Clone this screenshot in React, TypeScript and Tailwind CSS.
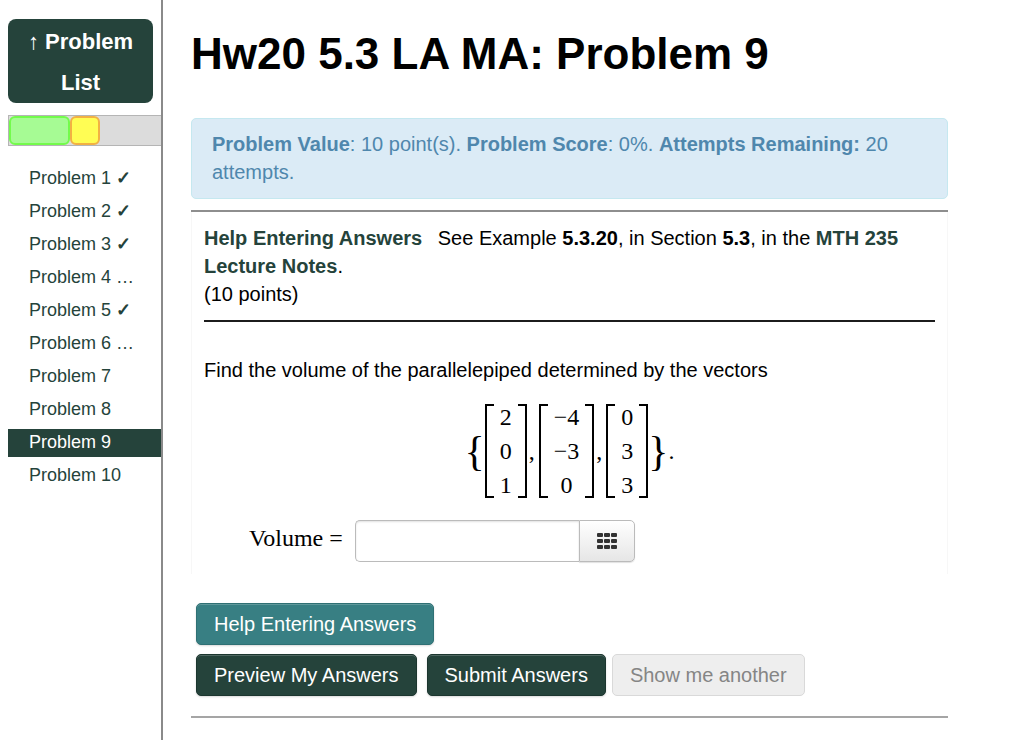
import clsx from "clsx";

const problems = [
  { id: 1, mark: "✓" },
  { id: 2, mark: "✓" },
  { id: 3, mark: "✓" },
  { id: 4, mark: "…" },
  { id: 5, mark: "✓" },
  { id: 6, mark: "…" },
  { id: 7, mark: "" },
  { id: 8, mark: "" },
  { id: 9, mark: "" },
  { id: 10, mark: "" },
];

const CURRENT = 9;

const vectors = [
  ["2", "0", "1"],
  ["−4", "−3", "0"],
  ["0", "3", "3"],
];

function Sidebar() {
  return (
    <aside className="w-[163px] shrink-0 border-r-2 border-[#8a8a8a] pl-2 pt-[19px]">
      <a
        href="#list"
        className="mr-2 block rounded-lg bg-[#25433b] px-4 pt-[2px] text-center text-[22px] leading-[41px] font-bold text-white"
      >
        <span className="font-normal">↑</span> Problem List
      </a>

      <div className="mt-3 flex h-[31px] border border-r-0 border-[#b5b5b5] bg-[#dcdcdc]">
        <div className="w-2/5 rounded-md border-2 border-[#73fb4c] bg-[#a6fb94]" />
        <div className="w-1/5 rounded-md border-2 border-[#f2b143] bg-[#fffd54]" />
      </div>

      <nav className="mt-[19px]">
        <ul className="flex flex-col gap-[5px]">
          {problems.map(({ id, mark }) => (
            <li key={id}>
              <a
                href={`#problem-${id}`}
                className={clsx(
                  "block pb-[2px] pl-[21px] text-[18px] leading-[26px] whitespace-nowrap",
                  id === CURRENT ? "bg-[#25433b] text-white" : "text-[#25433b]",
                )}
              >
                Problem {id} <span className={clsx(mark === "✓" && "font-bold")}>{mark}</span>
              </a>
            </li>
          ))}
        </ul>
      </nav>
    </aside>
  );
}

function Vector({ entries }: { entries: string[] }) {
  return (
    <div className="flex">
      <div className="w-[9px] border-2 border-r-0 border-black" />
      <div className="-my-1 px-[6px] text-center leading-[34px]">
        {entries.map((entry, idx) => (
          <div key={idx}>{entry}</div>
        ))}
      </div>
      <div className="w-[9px] border-2 border-l-0 border-black" />
    </div>
  );
}

function VectorSet() {
  return (
    <div className="flex items-center justify-center font-['Liberation_Serif',serif] text-[24px]">
      <span className="text-[42px] leading-[46px]">{"{"}</span>
      {vectors.map((entries, idx) => (
        <div key={idx} className="flex items-center">
          <Vector entries={entries} />
          {idx < vectors.length - 1 && <span className="pl-[2px] pr-1">,</span>}
        </div>
      ))}
      <span className="text-[42px] leading-[46px]">{"}"}</span>
      <span>.</span>
    </div>
  );
}

function KeypadIcon() {
  return (
    <svg width="20" height="16" viewBox="0 0 20 16" fill="#333" aria-hidden="true">
      {[0, 6, 12].map((y) =>
        [0, 7, 14].map((x) => (
          <rect key={`${x}-${y}`} x={x} y={y} width="6" height="4" rx="1" />
        )),
      )}
    </svg>
  );
}

const button =
  "h-[42px] rounded-[5px] border px-[17px] text-[20px] leading-7 whitespace-nowrap";
const solid =
  "text-white shadow-[inset_0_1px_0_rgba(255,255,255,0.2),0_1px_2px_rgba(0,0,0,0.15)]";

export default function App() {
  return (
    <div className="flex min-h-screen bg-white font-['Liberation_Sans',Arial,sans-serif] text-black">
      <Sidebar />

      <main className="mr-[76px] ml-7 min-w-0 flex-1 pt-6 pb-[22px] text-[20px] leading-7">
        <h1 className="text-[44px] leading-[60px] font-bold">Hw20 5.3 LA MA: Problem 9</h1>

        <div className="mt-[34px] rounded-[5px] border border-[#c5e8f0] bg-[#dbebf6] px-5 pt-[11px] pb-3 text-[#4f87ad]">
          <b>Problem Value</b>: 10 point(s). <b>Problem Score</b>: 0%. <b>Attempts Remaining:</b> 20
          attempts.
        </div>

        <hr className="mt-[11px] border-t-2 border-[#8e8e8e]" />

        <section className="border-x border-[#f7f7f7] px-3 pt-3 pb-3">
          <p>
            <a href="#help" className="mr-[10px] font-bold text-[#25433b]">
              Help Entering Answers
            </a>{" "}
            See Example <b>5.3.20</b>, in Section <b>5.3</b>, in the{" "}
            <a href="#notes" className="font-bold text-[#25433b]">
              MTH 235 Lecture Notes
            </a>
            .
          </p>
          <p>(10 points)</p>
          <hr className="mt-3 border-t-2 border-[#1c1c1c]" />

          <p className="mt-[34px] mb-5">
            Find the volume of the parallelepiped determined by the vectors
          </p>
          <VectorSet />

          <div className="mt-[22px] ml-[45px] flex items-center">
            <label
              htmlFor="volume"
              className="mr-3 pb-[6px] font-['Liberation_Serif',serif] text-[24px] whitespace-nowrap"
            >
              Volume =
            </label>
            <input
              id="volume"
              type="text"
              className="h-[42px] w-56 rounded-l-[5px] border border-r-0 border-[#bbb] px-2 shadow-[inset_0_1px_2px_rgba(0,0,0,0.12)] outline-none"
            />
            <button
              type="button"
              aria-label="Open equation editor"
              className="flex h-[42px] w-14 items-center justify-center rounded-r-[5px] border border-[#bbb] bg-linear-to-b from-white to-[#e6e6e6] shadow-[0_1px_1px_rgba(0,0,0,0.12)]"
            >
              <KeypadIcon />
            </button>
          </div>
        </section>

        <div className="mt-[29px] flex flex-col items-start gap-[9px] pl-[5px]">
          <button type="button" className={clsx(button, solid, "border-[#2f7074] bg-[#387f83]")}>
            Help Entering Answers
          </button>
          <div className="flex">
            <button type="button" className={clsx(button, solid, "border-[#1c362f] bg-[#25433b]")}>
              Preview My Answers
            </button>
            <button
              type="button"
              className={clsx(button, solid, "ml-[10px] border-[#1c362f] bg-[#25433b]")}
            >
              Submit Answers
            </button>
            <button
              type="button"
              disabled
              className={clsx(button, "ml-[6px] border-[#d9d9d9] bg-[#eeeeee] text-[#858585]")}
            >
              Show me another
            </button>
          </div>
        </div>

        <hr className="mt-5 border-t-2 border-[#a5a5a5]" />
      </main>
    </div>
  );
}
